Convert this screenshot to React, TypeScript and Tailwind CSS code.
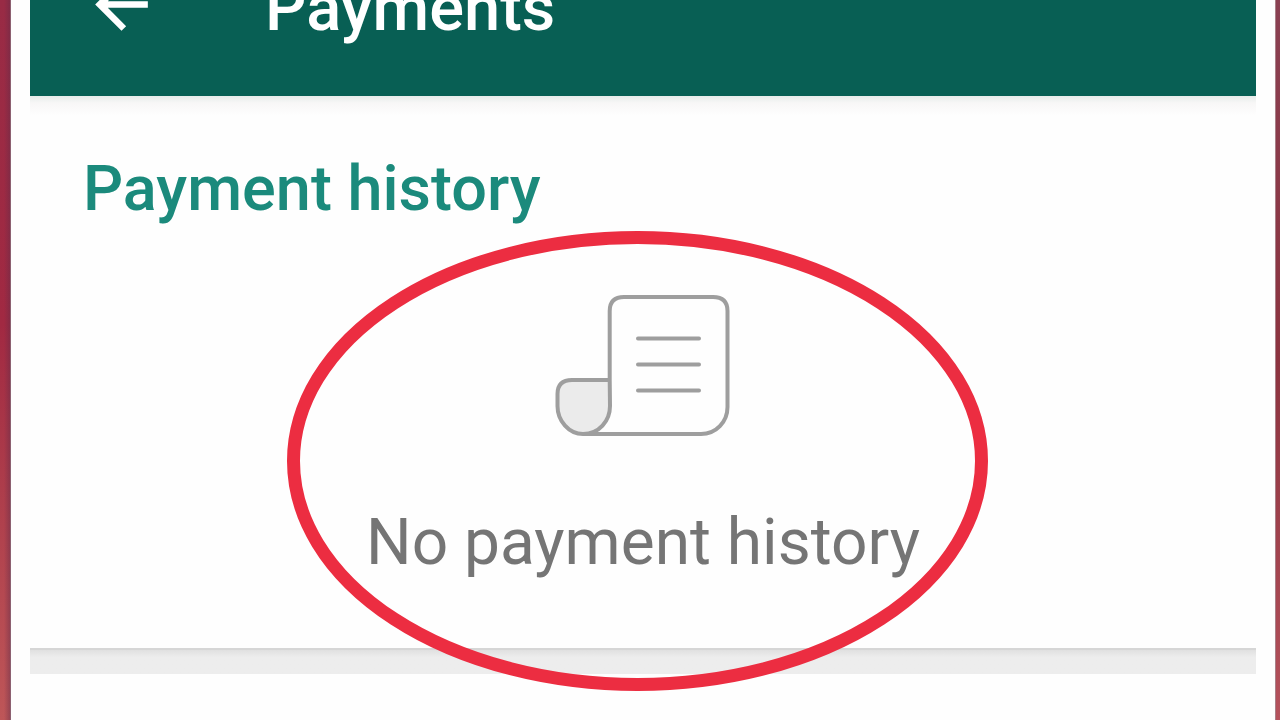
function BackIcon() {
  return (
    <svg viewBox="0 0 24 24" className="size-full" fill="currentColor" aria-hidden="true">
      <path d="M20 11H7.83l5.59-5.59L12 4l-8 8 8 8 1.41-1.41L7.83 13H20v-2z" />
    </svg>
  );
}

function ReceiptIcon() {
  return (
    <svg
      viewBox="0 0 176 144"
      className="h-[144px] w-[176px]"
      fill="none"
      stroke="#9e9e9e"
      strokeWidth="4"
      strokeLinecap="round"
      aria-hidden="true"
    >
      <path
        d="M55 86H17Q2.500 86 2.500 100V112C2.500 127 14 140 28 140C44 140 55 127 55 112Z"
        fill="#ebebeb"
        stroke="none"
      />
      <path d="M28 140H146C161 140 172.500 128 172.500 113V17Q172.500 3 158 3H69Q54.700 3 54.700 17V86L55 112C55 127 44 140 28 140C14 140 2.500 127 2.500 112V100Q2.500 86 17 86H54.700" />
      <path d="M83 44.500H144M83 70.500H144M83 96.500H144" />
    </svg>
  );
}

function Highlight() {
  return (
    <svg
      viewBox="0 0 712 460"
      className="pointer-events-none absolute top-[135px] left-1/2 h-[460px] w-[712px] -translate-x-1/2"
      fill="none"
      aria-hidden="true"
    >
      <ellipse cx="350.500" cy="230" rx="344" ry="223.500" stroke="#ec2d41" strokeWidth="13" />
    </svg>
  );
}

export default function App() {
  return (
    <div className="grid min-h-screen grid-cols-[11px_1fr_5px] font-['Roboto',sans-serif]">
      <div className="border-r border-[#8c6070] bg-linear-to-b from-[#982b45] via-[#a12942] via-45% to-[#be5658]">
        <div className="h-full bg-linear-to-r from-transparent from-40% to-[#5d2c48]/40" />
      </div>
      <div className="bg-[#fefefe] pr-[19px] pl-[19px]">
        <header className="flex h-24 items-end overflow-hidden bg-[#085f54] pb-12 pl-[52px] text-white">
          <button type="button" aria-label="Back" className="mb-1 size-[79px] shrink-0">
            <BackIcon />
          </button>
          <h1 className="ml-[104px] text-[65px] leading-[80px] font-medium">Payments</h1>
        </header>
        <main className="relative">
          <div className="h-5 bg-linear-to-b from-[#e6ecea] via-[#f8f7f7] via-35% to-[#fefefe]" />
          <section className="flex flex-col pt-10 pb-[73px]">
            <h2 className="pl-[53px] text-[63px] leading-[65px] font-medium text-[#1b8a7c]">
              Payment history
            </h2>
            <div className="flex flex-col items-center gap-[72px] pt-[73px]">
              <ReceiptIcon />
              <p className="text-[64px] leading-[65px] text-[#757575]">No payment history</p>
            </div>
          </section>
          <div className="h-[26px] border-t-2 border-[#d6d6d6] bg-linear-to-b from-[#e0e0e0] to-[#ededed] to-30%" />
          <Highlight />
        </main>
      </div>
      <div className="border-l border-[#a88088] bg-linear-to-b from-[#8a4052] via-[#8c333f] via-50% to-[#b5525c]" />
    </div>
  );
}
